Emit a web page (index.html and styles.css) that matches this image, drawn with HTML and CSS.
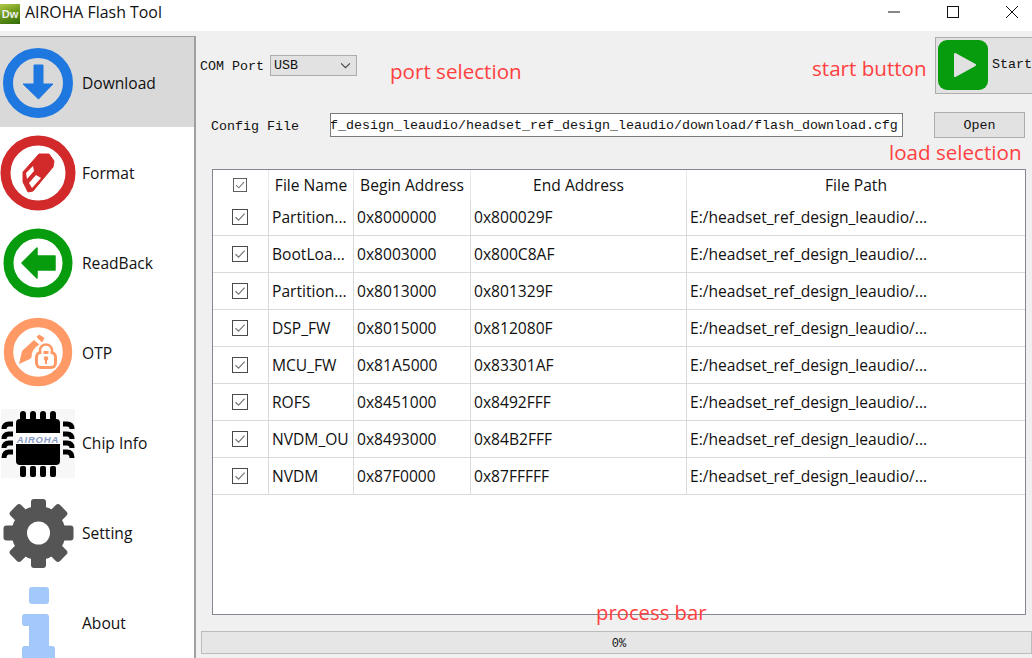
FILE: index.html
```html
<!DOCTYPE html>
<html lang="en">
<head>
<meta charset="utf-8">
<title>AIROHA Flash Tool</title>
<link rel="stylesheet" href="styles.css">
</head>
<body>
<svg class="defs" width="0" height="0" aria-hidden="true">
  <symbol id="check" viewBox="0 0 16 16">
    <rect x="0.5" y="0.5" width="15" height="15" fill="#fff" stroke="#4a4a4a"/>
    <path d="M3.5 8.2 L6.6 11.2 L12.6 4.6" fill="none" stroke="#777" stroke-width="1.2"/>
  </symbol>
</svg>
<div class="window">
  <header class="titlebar">
    <div class="app-logo">Dw</div>
    <div class="app-title">AIROHA Flash Tool</div>
    <div class="win-controls">
      <svg class="win-btn" viewBox="0 0 14 14"><path d="M1 7H13" stroke="#111" fill="none"/></svg>
      <svg class="win-btn" viewBox="0 0 14 14"><rect x="1.5" y="1.5" width="11" height="11" stroke="#111" fill="none"/></svg>
      <svg class="win-btn" viewBox="0 0 14 14"><path d="M1 1L13 13M13 1L1 13" stroke="#111" fill="none"/></svg>
    </div>
  </header>
  <div class="body">
    <nav class="sidebar">
      <div class="nav-item selected">
        <svg class="nav-icon" viewBox="0 0 82 90">
          <circle cx="38" cy="46" r="30" fill="none" stroke="#1e78e0" stroke-width="10"/>
          <path d="M34 28H43V47H53L38.5 62L23 47H34Z" fill="#1e78e0" stroke="#1e78e0" stroke-linejoin="round"/>
        </svg>
        <span class="nav-label">Download</span>
      </div>
      <div class="nav-item">
        <svg class="nav-icon" viewBox="0 0 82 90">
          <circle cx="38" cy="46" r="32.5" fill="none" stroke="#d22a2a" stroke-width="10"/>
          <path d="M39 27H49L54 34L53 40L33 64L28 65L23 55V45Z" fill="#d22a2a" stroke="#d22a2a" stroke-linejoin="round"/>
          <path d="M26 46L33 39L34 44L27 52Z" fill="#fff"/>
          <path d="M29 56L36 48L41 51L32 61Z" fill="#fff"/>
        </svg>
        <span class="nav-label">Format</span>
      </div>
      <div class="nav-item">
        <svg class="nav-icon" viewBox="0 0 82 90">
          <circle cx="38" cy="46" r="29.5" fill="none" stroke="#069c0e" stroke-width="10"/>
          <path d="M22 46L37 31V39H55V53H37V61Z" fill="#069c0e" stroke="#069c0e" stroke-width="1.5" stroke-linejoin="round"/>
        </svg>
        <span class="nav-label">ReadBack</span>
      </div>
      <div class="nav-item">
        <svg class="nav-icon" viewBox="0 0 82 90">
          <circle cx="38" cy="45" r="29.5" fill="none" stroke="#ff9966" stroke-width="9.5"/>
          <path d="M19 57L22 44L34 33L42 40L30 52Z" fill="#ff9966"/>
          <path d="M37 30L39 28L44 31L42 35Z" fill="#ff9966" stroke="#ff9966" stroke-linejoin="round"/>
          <circle cx="45" cy="50" r="13.500" fill="#fff"/>
          <rect x="35" y="44" width="22" height="18" rx="6" fill="#ff9966"/>
          <path d="M40 46V43.500A6 6 0 0 1 52 43.500V46" fill="none" stroke="#ff9966" stroke-width="2.500"/>
          <path d="M42.500 47V43.500A3.500 3.500 0 0 1 49.500 43.500V47" fill="none" stroke="#fff" stroke-width="2"/>
          <rect x="38" y="47" width="16" height="12" rx="3" fill="#fff"/>
          <circle cx="46" cy="51.500" r="2.300" fill="#ff9966"/>
          <rect x="45" y="52" width="2" height="5" fill="#ff9966"/>
        </svg>
        <span class="nav-label">OTP</span>
      </div>
      <div class="nav-item">
        <svg class="nav-icon" viewBox="0 0 82 90">
          <rect x="1" y="12" width="74" height="69" fill="#f7f7f7"/>
          <g fill="#000">
            <rect x="20" y="14" width="6" height="10" rx="3"/>
            <rect x="30" y="14" width="6" height="10" rx="3"/>
            <rect x="40" y="14" width="6" height="10" rx="3"/>
            <rect x="50" y="14" width="6" height="10" rx="3"/>
            <rect x="20" y="69" width="6" height="11" rx="2"/>
            <rect x="30" y="69" width="6" height="11" rx="2"/>
            <rect x="40" y="69" width="6" height="11" rx="2"/>
            <rect x="50" y="69" width="6" height="11" rx="2"/>
            <rect x="16" y="22" width="44" height="46" rx="4"/>
          </g>
          <g fill="none" stroke="#000" stroke-width="5">
            <path d="M13 27H9Q4 27 4 32"/>
            <path d="M13 37H9Q4 37 4 42"/>
            <path d="M13 46H9Q4 46 4 51"/>
            <path d="M13 55H9Q4 55 4 61"/>
            <path d="M63 27H67Q72 27 72 32"/>
            <path d="M63 37H67Q72 37 72 42"/>
            <path d="M63 46H67Q72 46 72 51"/>
            <path d="M63 55H67Q72 55 72 61"/>
          </g>
          <rect x="16" y="36" width="44" height="11" fill="#fff"/>
          <text x="38" y="45.500" class="chip-text" text-anchor="middle">AIROHA</text>
        </svg>
        <span class="nav-label">Chip Info</span>
      </div>
      <div class="nav-item">
        <svg class="nav-icon" viewBox="0 0 82 90">
          <g fill="#555">
            <circle cx="38.500" cy="46" r="27"/>
            <rect x="31" y="12" width="15" height="69" rx="3"/>
            <rect x="31" y="11" width="15" height="70" rx="3" transform="rotate(45 38.500 46)"/>
            <rect x="31" y="11" width="15" height="70" rx="3" transform="rotate(90 38.500 46)"/>
            <rect x="31" y="11" width="15" height="70" rx="3" transform="rotate(135 38.500 46)"/>
          </g>
          <circle cx="38.500" cy="46" r="11.500" fill="#fff"/>
        </svg>
        <span class="nav-label">Setting</span>
      </div>
      <div class="nav-item">
        <svg class="nav-icon" viewBox="0 0 82 90">
          <rect x="29" y="10" width="20" height="17" rx="3" fill="#a3c8fa"/>
          <path d="M25 37H46Q49 37 49 40V69H52Q55 69 55 72V90H22V72Q22 69 25 69H29V49H25Q22 49 22 46V40Q22 37 25 37Z" fill="#a3c8fa"/>
        </svg>
        <span class="nav-label">About</span>
      </div>
    </nav>
    <main class="main">
      <div class="port-row">
        <span class="mono port-label">COM Port</span>
        <div class="combo mono">USB
          <svg class="combo-arrow" viewBox="0 0 10 6"><path d="M1 1L5 5L9 1" fill="none" stroke="#444" stroke-width="1"/></svg>
        </div>
        <div class="start-btn">
          <div class="start-icon">
            <svg class="play" viewBox="0 0 24 26"><path d="M2 2L22 13L2 24Z" fill="#e1e1e1" stroke="#e1e1e1" stroke-width="2" stroke-linejoin="round"/></svg>
          </div>
          <span class="mono">Start</span>
        </div>
      </div>
      <div class="config-row">
        <span class="mono config-label">Config File</span>
        <div class="config-input mono">f_design_leaudio/headset_ref_design_leaudio/download/flash_download.cfg</div>
        <div class="open-btn mono">Open</div>
      </div>
      <div class="table-box">
        <table class="files">
          <colgroup>
            <col class="c-check"><col class="c-name"><col class="c-begin"><col class="c-end"><col class="c-path">
          </colgroup>
          <thead>
            <tr>
              <th class="cell-check"><svg class="cb-head"><use href="#check"/></svg></th>
              <th>File Name</th><th>Begin Address</th><th>End Address</th><th>File Path</th>
            </tr>
          </thead>
          <tbody>
            <tr><td class="cell-check"><svg class="cb"><use href="#check"/></svg></td><td>Partition...</td><td>0x8000000</td><td>0x800029F</td><td>E:/headset_ref_design_leaudio/...</td></tr>
            <tr><td class="cell-check"><svg class="cb"><use href="#check"/></svg></td><td>BootLoa...</td><td>0x8003000</td><td>0x800C8AF</td><td>E:/headset_ref_design_leaudio/...</td></tr>
            <tr><td class="cell-check"><svg class="cb"><use href="#check"/></svg></td><td>Partition...</td><td>0x8013000</td><td>0x801329F</td><td>E:/headset_ref_design_leaudio/...</td></tr>
            <tr><td class="cell-check"><svg class="cb"><use href="#check"/></svg></td><td>DSP_FW</td><td>0x8015000</td><td>0x812080F</td><td>E:/headset_ref_design_leaudio/...</td></tr>
            <tr><td class="cell-check"><svg class="cb"><use href="#check"/></svg></td><td>MCU_FW</td><td>0x81A5000</td><td>0x83301AF</td><td>E:/headset_ref_design_leaudio/...</td></tr>
            <tr><td class="cell-check"><svg class="cb"><use href="#check"/></svg></td><td>ROFS</td><td>0x8451000</td><td>0x8492FFF</td><td>E:/headset_ref_design_leaudio/...</td></tr>
            <tr><td class="cell-check"><svg class="cb"><use href="#check"/></svg></td><td>NVDM_OU</td><td>0x8493000</td><td>0x84B2FFF</td><td>E:/headset_ref_design_leaudio/...</td></tr>
            <tr><td class="cell-check"><svg class="cb"><use href="#check"/></svg></td><td>NVDM</td><td>0x87F0000</td><td>0x87FFFFF</td><td>E:/headset_ref_design_leaudio/...</td></tr>
          </tbody>
        </table>
      </div>
      <div class="progress mono">0%</div>
      <span class="note note-port">port selection</span>
      <span class="note note-start">start button</span>
      <span class="note note-load">load selection</span>
      <span class="note note-process">process bar</span>
    </main>
  </div>
</div>
</body>
</html>
```
FILE: styles.css
```css
* { box-sizing: border-box; }
html, body { margin: 0; padding: 0; }
body {
  width: 1032px;
  height: 658px;
  overflow: hidden;
  background: #f0f0f0;
  font-family: "Open Sans", "Noto Sans", sans-serif;
  color: #111;
}
.defs { position: absolute; }
.window { display: flex; flex-direction: column; width: 1032px; height: 658px; overflow: hidden; }
.mono { font-family: "Liberation Mono", monospace; font-size: 13.33px; color: #111; }

.titlebar { display: flex; align-items: center; height: 31px; flex: none; background: #fff; padding-bottom: 7px; }
.app-logo {
  width: 20px; height: 20px; margin: 4px 5px 0 0;
  background: linear-gradient(160deg, #b5c94a 0%, #6d9a1c 45%, #2f6a08 100%);
  color: #eee; font: bold 11px/20px "Liberation Sans", sans-serif; text-align: center;
}
.app-title { font-size: 15.9px; color: #111; line-height: 22px; margin-top: -1px; }
.win-controls { margin-left: auto; display: flex; gap: 45px; padding-right: 13px; }
.win-btn { width: 14px; height: 14px; display: block; }

.body { display: flex; flex: 1; min-height: 0; }

.sidebar {
  width: 196px; flex: none; margin-top: 5px;
  background: #fff;
  border-top: 1px solid #a0a0a0;
  border-right: 2px solid #a0a0a0;
  overflow: hidden;
}
.nav-item { display: flex; align-items: center; height: 90px; }
.nav-item.selected { background: #d9d9d9; }
.nav-icon { width: 82px; height: 90px; flex: none; display: block; }
.nav-label { font-size: 15.6px; color: #111; line-height: 22px; margin-top: 1px; }
.chip-text { font: italic bold 9.5px "Liberation Sans", sans-serif; fill: #8899c4; letter-spacing: 0.8px; }

.main { position: relative; flex: 1; min-width: 0; padding-top: 6px; overflow: hidden; }

.port-row { display: flex; align-items: center; height: 57px; padding-left: 4px; }
.port-label { width: 70px; padding-top: 2px; }
.combo {
  position: relative; width: 87px; height: 21px; line-height: 20px;
  padding-left: 3px;
  background: #e2e2e2; border: 1px solid #adadad;
}
.combo-arrow { position: absolute; right: 5px; top: 6px; width: 11px; height: 7px; }
.start-btn {
  display: flex; align-items: flex-start; gap: 4px;
  margin-left: auto; width: 110px; height: 57px; flex: none;
  margin-right: -13px; padding: 2px 0 0 2px;
  background: #e2e2e2; border: 1px solid #adadad;
  align-self: flex-start;
}
.start-btn .mono { line-height: 50px; }
.start-icon {
  width: 50px; height: 50px; flex: none; border-radius: 9px; background: #069c0e;
  display: flex; align-items: center; justify-content: center;
  padding-left: 4px;
}
.play { width: 24px; height: 26px; display: block; }

.config-row { display: flex; align-items: center; height: 26px; margin-top: 18px; padding-left: 15px; }
.config-label { width: 119px; padding-top: 2px; }
.config-input {
  width: 573px; height: 24px; line-height: 24px; text-indent: -1px;
  background: #fff; border: 1px solid #7a7a7a; white-space: nowrap; overflow: hidden;
}
.open-btn {
  width: 91px; height: 26px; line-height: 26px; margin-left: 31px; text-align: center;
  background: #e2e2e2; border: 1px solid #adadad;
}

.table-box {
  width: 814px; height: 446px; margin: 31px 0 0 16px;
  background: #fff; border: 1px solid #828790;
}
.files { width: 812px; border-collapse: separate; border-spacing: 0; table-layout: fixed; font-size: 15.6px; color: #111; }
.c-check { width: 56px; }
.c-name { width: 85px; }
.c-begin { width: 117px; }
.c-end { width: 216px; }
.files th {
  height: 29px; padding: 0; font-weight: 400; text-align: center; white-space: nowrap;
  border-right: 1px solid #e8e8e8;
}
.files td {
  height: 37px; padding: 0 0 1px 3px; white-space: nowrap; overflow: hidden;
  border-right: 1px solid #dadada; border-bottom: 1px solid #dadada;
}
.files th:last-child, .files td:last-child { border-right: 0; }
.files td.cell-check, .files th.cell-check { padding: 0 2px 0 0; text-align: center; }
.cb { width: 16px; height: 16px; display: block; margin: 0 auto; }
.cb-head { width: 14px; height: 14px; display: block; margin: 0 auto; }

.progress {
  width: 831px; height: 23px; line-height: 25px; margin: 16px 0 0 5px; padding-left: 5px; text-align: center;
  background: #e6e6e6; border: 1px solid #bcbcbc; font-size: 12px;
}

.note { position: absolute; color: #ff4040; line-height: 26px; white-space: nowrap; font-size: 20.6px; }
.note-port { left: 194px; top: 27px; }
.note-start { left: 616px; top: 24px; }
.note-load { left: 693px; top: 108px; }
.note-process { left: 400px; top: 568px; font-size: 20.3px; }
```
